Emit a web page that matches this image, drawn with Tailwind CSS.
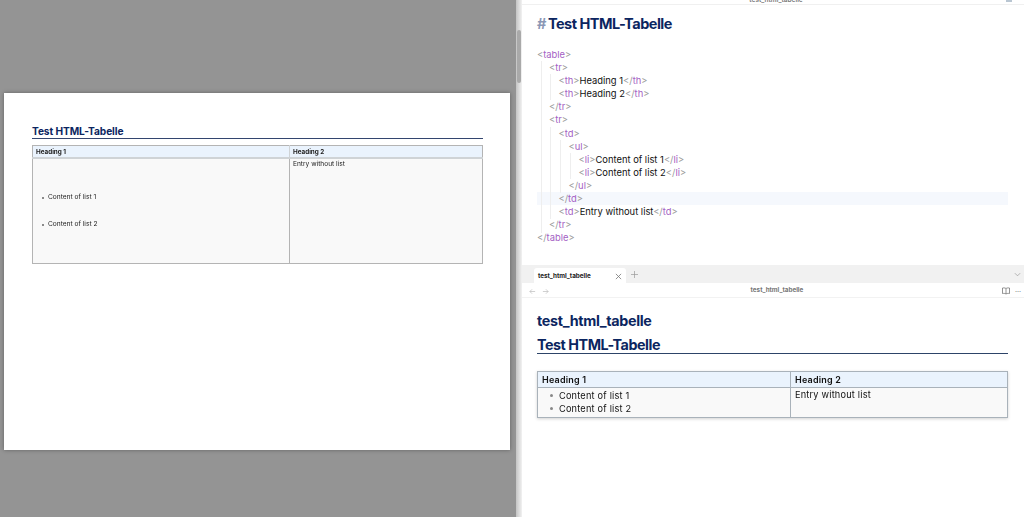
<!DOCTYPE html>
<html lang="de">
<head>
<meta charset="UTF-8" />
<title>test_html_tabelle</title>
<script src="https://cdn.jsdelivr.net/npm/@tailwindcss/browser@4"></script>
</head>
<body class="w-[1024px] h-[517px] overflow-hidden flex font-['Inter',sans-serif] bg-white antialiased">

<!-- PDF preview -->
<div class="w-[516px] h-full shrink-0 bg-[#949494] pl-[4px] pt-[93px]">
  <div class="w-[506px] h-[357px] bg-white shadow-[0_0_4px_rgba(0,0,0,0.35)] pt-[30px] px-[28px]">
    <div class="w-[451px] border-b border-[#33456f] pt-[1px] text-[10.2px] leading-[14px] font-bold tracking-[-0.1px] text-[#0b2560]">Test HTML-Tabelle</div>
    <table class="mt-[6px] w-[451px] h-[119px] table-fixed border-collapse text-[6.6px] leading-[9px] text-[#222] border border-[#b4b4b4] [will-change:transform]">
      <tbody>
        <tr class="h-[11px]">
          <th class="w-[257px] border-r border-b-2 border-[#cfd3d6] bg-[#eaf3fd] pl-[3px] pt-[2px] text-left text-[6.3px] font-bold align-middle">Heading 1</th>
          <th class="border-b-2 border-[#cfd3d6] bg-[#eaf3fd] pl-[3px] pt-[2px] text-left text-[6.3px] font-bold align-middle">Heading 2</th>
        </tr>
        <tr>
          <td class="border-r border-[#b4b4b4] bg-[#f9f9f9] align-top p-0">
            <div class="pt-[34px] pl-[9px]">
              <div class="flex items-center h-[9px]"><span class="w-[2px] h-[2px] rounded-full bg-[#666] mr-[4px]"></span>Content of list 1</div>
              <div class="flex items-center h-[9px] mt-[18px]"><span class="w-[2px] h-[2px] rounded-full bg-[#666] mr-[4px]"></span>Content of list 2</div>
            </div>
          </td>
          <td class="bg-[#f9f9f9] align-top px-[3px] pt-[1px]">Entry without list</td>
        </tr>
      </tbody>
    </table>
  </div>
</div>

<!-- scrollbar gutter -->
<div class="w-[6px] h-full shrink-0 bg-gradient-to-r from-[#c4c4c4] to-[#f2f2f2] pt-[30px] pl-[1px]">
  <div class="w-[4px] h-[53px] rounded-full bg-[#a9a9a9]"></div>
</div>

<!-- right side -->
<div class="flex-1 h-full flex flex-col min-w-0 bg-white">

  <!-- editor -->
  <div class="h-[265px] shrink-0 flex flex-col">
    <div class="relative h-[5px] shrink-0 border-b border-[#f0f0f0] overflow-hidden flex items-end justify-center">
      <span class="text-[6.5px] leading-[6px] font-semibold text-[#777] translate-x-[3px] translate-y-[-1px]">test_html_tabelle</span>
      <span class="absolute right-[12px] top-0 w-[6px] h-[2px] bg-[#b9c6d2]"></span>
    </div>
    <div class="pl-[15px] pr-[16px] pt-[10px]">
      <div class="h-[18px] flex items-center gap-[2px] text-[14.5px] font-bold tracking-[-0.5px] text-[#0b2560]">
        <span class="text-[#8a97b5]">#</span><span>Test HTML-Tabelle</span>
      </div>
      <div class="relative mt-[15px] text-[9.4px] leading-[13.1px] text-[#111]">
        <span class="absolute left-[4px] top-[13px] w-px h-[172px] bg-[#eeeeee]"></span>
        <span class="absolute left-[13px] top-[26px] w-px h-[26px] bg-[#eeeeee]"></span>
        <span class="absolute left-[13px] top-[79px] w-px h-[92px] bg-[#eeeeee]"></span>
        <span class="absolute left-[23px] top-[92px] w-px h-[53px] bg-[#eeeeee]"></span>
        <span class="absolute left-[33px] top-[105px] w-px h-[26px] bg-[#eeeeee]"></span>
        <div class="h-[13.1px]"><span class="text-[#9a9a9a]">&lt;</span><span class="text-[#a45fc4]">table</span><span class="text-[#9a9a9a]">&gt;</span></div>
        <div class="h-[13.1px] pl-[12px]"><span class="text-[#9a9a9a]">&lt;</span><span class="text-[#a45fc4]">tr</span><span class="text-[#9a9a9a]">&gt;</span></div>
        <div class="h-[13.1px] pl-[21.5px]"><span class="text-[#9a9a9a]">&lt;</span><span class="text-[#a45fc4]">th</span><span class="text-[#9a9a9a]">&gt;</span>Heading 1<span class="text-[#9a9a9a]">&lt;/</span><span class="text-[#a45fc4]">th</span><span class="text-[#9a9a9a]">&gt;</span></div>
        <div class="h-[13.1px] pl-[21.5px]"><span class="text-[#9a9a9a]">&lt;</span><span class="text-[#a45fc4]">th</span><span class="text-[#9a9a9a]">&gt;</span>Heading 2<span class="text-[#9a9a9a]">&lt;/</span><span class="text-[#a45fc4]">th</span><span class="text-[#9a9a9a]">&gt;</span></div>
        <div class="h-[13.1px] pl-[12px]"><span class="text-[#9a9a9a]">&lt;/</span><span class="text-[#a45fc4]">tr</span><span class="text-[#9a9a9a]">&gt;</span></div>
        <div class="h-[13.1px] pl-[12px]"><span class="text-[#9a9a9a]">&lt;</span><span class="text-[#a45fc4]">tr</span><span class="text-[#9a9a9a]">&gt;</span></div>
        <div class="h-[13.1px] pl-[21.5px]"><span class="text-[#9a9a9a]">&lt;</span><span class="text-[#a45fc4]">td</span><span class="text-[#9a9a9a]">&gt;</span></div>
        <div class="h-[13.1px] pl-[31.5px]"><span class="text-[#9a9a9a]">&lt;</span><span class="text-[#a45fc4]">ul</span><span class="text-[#9a9a9a]">&gt;</span></div>
        <div class="h-[13.1px] pl-[41.5px]"><span class="text-[#9a9a9a]">&lt;</span><span class="text-[#a45fc4]">li</span><span class="text-[#9a9a9a]">&gt;</span>Content of list 1<span class="text-[#9a9a9a]">&lt;/</span><span class="text-[#a45fc4]">li</span><span class="text-[#9a9a9a]">&gt;</span></div>
        <div class="h-[13.1px] pl-[41.5px]"><span class="text-[#9a9a9a]">&lt;</span><span class="text-[#a45fc4]">li</span><span class="text-[#9a9a9a]">&gt;</span>Content of list 2<span class="text-[#9a9a9a]">&lt;/</span><span class="text-[#a45fc4]">li</span><span class="text-[#9a9a9a]">&gt;</span></div>
        <div class="h-[13.1px] pl-[31.5px]"><span class="text-[#9a9a9a]">&lt;/</span><span class="text-[#a45fc4]">ul</span><span class="text-[#9a9a9a]">&gt;</span></div>
        <div class="h-[13.1px] pl-[21.5px] bg-[#f5f8fd]"><span class="text-[#9a9a9a]">&lt;/</span><span class="text-[#a45fc4]">td</span><span class="text-[#9a9a9a]">&gt;</span></div>
        <div class="h-[13.1px] pl-[21.5px]"><span class="text-[#9a9a9a]">&lt;</span><span class="text-[#a45fc4]">td</span><span class="text-[#9a9a9a]">&gt;</span>Entry without list<span class="text-[#9a9a9a]">&lt;/</span><span class="text-[#a45fc4]">td</span><span class="text-[#9a9a9a]">&gt;</span></div>
        <div class="h-[13.1px] pl-[12px]"><span class="text-[#9a9a9a]">&lt;/</span><span class="text-[#a45fc4]">tr</span><span class="text-[#9a9a9a]">&gt;</span></div>
        <div class="h-[13.1px]"><span class="text-[#9a9a9a]">&lt;/</span><span class="text-[#a45fc4]">table</span><span class="text-[#9a9a9a]">&gt;</span></div>
      </div>
    </div>
  </div>

  <!-- tab bar -->
  <div class="h-[18px] shrink-0 bg-[#f1f1f1] flex items-end pl-[12px] pr-[3px]">
    <div class="w-[92px] h-[15px] bg-white rounded-t-[3px] flex items-center justify-between pl-[4px] pr-[4px] pt-[1px]">
      <span class="text-[6.3px] pt-[1px] font-bold text-[#222]">test_html_tabelle</span>
      <svg class="w-[7px] h-[7px]" viewBox="0 0 8 8" fill="none" stroke="#777" stroke-width="0.9"><path d="M1 1l6 6M7 1l-6 6"/></svg>
    </div>
    <svg class="w-[7px] h-[7px] ml-[5px] mb-[5px]" viewBox="0 0 8 8" fill="none" stroke="#999" stroke-width="0.8"><path d="M4 0v8M0 4h8"/></svg>
    <svg class="w-[7px] h-[7px] ml-auto mb-[5px]" viewBox="0 0 8 8" fill="none" stroke="#999" stroke-width="0.8"><path d="M1 2.500l3 3 3-3"/></svg>
  </div>

  <!-- preview nav -->
  <div class="h-[15px] shrink-0 border-b border-[#f2f2f2] flex items-center pl-[7px] pr-[3px] pt-[2px]">
    <svg class="w-[7px] h-[7px]" viewBox="0 0 8 8" fill="none" stroke="#bbb" stroke-width="0.8"><path d="M7 4H1M3.500 1.500L1 4l2.500 2.500"/></svg>
    <svg class="w-[7px] h-[7px] ml-[6px]" viewBox="0 0 8 8" fill="none" stroke="#bbb" stroke-width="0.8"><path d="M1 4h6M4.500 1.500L7 4 4.500 6.500"/></svg>
    <span class="flex-1 text-center text-[6.3px] font-bold text-[#777] pl-[3px]">test_html_tabelle</span>
    <svg class="w-[8px] h-[8px]" viewBox="0 0 8 8" fill="none" stroke="#666" stroke-width="0.7"><path d="M4 1.500C3 .8 1.500 .8.500 1v5.500c1-.2 2.500-.2 3.500.5 1-.7 2.500-.7 3.500-.5V1C6.500 .8 5 .8 4 1.500zM4 1.500V7"/></svg>
    <span class="ml-[5px] text-[7px] leading-none text-[#777]">···</span>
  </div>

  <!-- preview -->
  <div class="flex-1 pl-[15px] pr-[16px] pt-[14px]">
    <div class="text-[14.3px] leading-[18px] font-bold tracking-[-0.3px] text-[#0b2560]">test_html_tabelle</div>
    <div class="mt-[6px] border-b-[1.5px] border-[#2d4468] text-[14.3px] leading-[17px] font-bold tracking-[-0.45px] text-[#0b2560]">Test HTML-Tabelle</div>
    <table class="mt-[17px] w-full table-fixed border-collapse text-[9.2px] leading-[13px] tracking-[0.2px] text-[#111] border border-[#a9b2ba] shadow-[0_1px_3px_rgba(0,0,0,0.18)] [will-change:transform]">
      <tbody>
        <tr class="h-[16px]">
          <th class="w-[253px] border-r border-b border-[#a9b2ba] bg-[#eaf3fd] pl-[4px] pb-[1px] text-left text-[9px] font-semibold">Heading 1</th>
          <th class="border-b border-[#a9b2ba] bg-[#eaf3fd] pl-[4px] pb-[1px] text-left text-[9px] font-semibold">Heading 2</th>
        </tr>
        <tr class="h-[30px]">
          <td class="border-r border-[#a9b2ba] bg-[#f9f9f9] align-top p-0 pl-[12px]">
            <div class="flex items-center h-[14px]"><span class="w-[3px] h-[3px] rounded-full bg-[#888] mr-[6px]"></span>Content of list 1</div>
            <div class="flex items-center h-[13px]"><span class="w-[3px] h-[3px] rounded-full bg-[#888] mr-[6px]"></span>Content of list 2</div>
          </td>
          <td class="bg-[#f9f9f9] align-top pl-[4px]">Entry without list</td>
        </tr>
      </tbody>
    </table>
  </div>
</div>

</body>
</html>
